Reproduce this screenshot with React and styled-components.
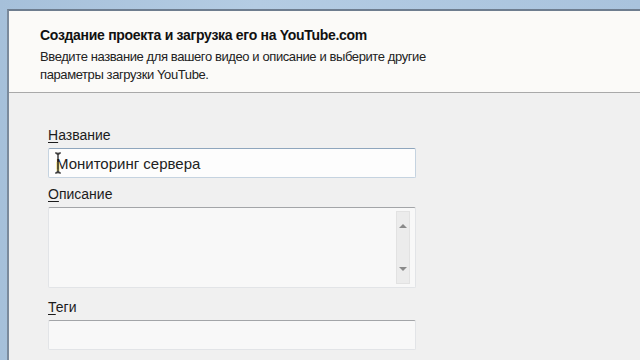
import React from 'react';
import styled, { createGlobalStyle } from 'styled-components';

const Global = createGlobalStyle`
  html, body { margin: 0; padding: 0; }
  body {
    width: 640px;
    height: 360px;
    overflow: hidden;
    font-family: "Liberation Sans", "DejaVu Sans", sans-serif;
  }
`;

const Frame = styled.div`
  width: 640px;
  height: 360px;
  display: grid;
  grid-template-rows: 9px 1fr;
  grid-template-columns: 7px 1fr;
  background: linear-gradient(90deg, #a6c0da 0%, #b4cce3 40%, #a9c3dd 100%);
`;

const Glass = styled.div`
  grid-column: 1 / 3;
`;

const Client = styled.div`
  grid-column: 2;
  display: flex;
  flex-direction: column;
  border-top: 2px solid #6e7d8f;
  border-left: 2px solid #7b8a9c;
  background: #f0f0f0;
  min-height: 0;
`;

const Header = styled.header`
  height: 82px;
  box-sizing: border-box;
  padding: 15px 0 0 31px;
  background: #fbfaf8;
  border-bottom: 1px solid #a9a9a9;
  color: #1e1e1e;
`;

const Title = styled.h1`
  margin: 0;
  font-size: 14px;
  font-weight: bold;
  line-height: 18px;
  letter-spacing: -0.3px;
  color: #111;
`;

const Subtitle = styled.p`
  margin: 4px 0 0;
  font-size: 13px;
  line-height: 18px;
  letter-spacing: -0.4px;
  color: #222;
`;

const Form = styled.section`
  display: flex;
  flex-direction: column;
  padding: 34px 0 0 39px;
  width: 368px;
`;

const Label = styled.label`
  font-size: 14px;
  line-height: 16px;
  color: #1c1c1c;
  margin-bottom: 5px;
  u { text-decoration-thickness: 1px; text-underline-offset: 2px; }
`;

const Field = styled.div`
  position: relative;
  box-sizing: border-box;
  height: ${p => p.h}px;
  margin-bottom: ${p => p.gap}px;
  background: ${p => (p.focused ? '#fdfdfd' : '#f8f8f8')};
  border: 1px solid ${p => (p.focused ? '#c5d3e0' : '#e2e4e7')};
  border-top-color: ${p => (p.focused ? '#8fa6bd' : '#a3a5a8')};
  border-radius: 2px;
  display: flex;
  align-items: center;
  padding-left: 7px;
  font-size: 15px;
  color: #222;
`;

const Scroll = styled.div`
  position: absolute;
  top: 3px;
  right: 5px;
  bottom: 3px;
  width: 14px;
  background: #ececec;
  border: 1px solid #e2e2e2;
  display: flex;
  flex-direction: column;
  justify-content: space-between;
  align-items: center;
  padding: 12px 0 12px;
  box-sizing: border-box;
`;

const Arrow = styled.span`
  width: 0;
  height: 0;
  border-left: 4px solid transparent;
  border-right: 4px solid transparent;
  ${p => (p.up ? 'border-bottom: 4px solid #8a8a8a;' : 'border-top: 4px solid #8a8a8a;')}
`;

const Cursor = styled.svg`
  position: absolute;
  left: 5px;
  top: 3px;
`;

const IBeam = () => (
  <Cursor width="8" height="22" viewBox="0 0 8 22">
    <rect x="2.5" y="10" width="3" height="9" fill="#e4cf5c" opacity="0.75" />
    <path d="M1 1 H3 V2 H5 V1 H7 M4 2 V20 M1 21 H3 V20 H5 V21 H7" stroke="#111" strokeWidth="1.2" fill="none" />
  </Cursor>
);

export default function App() {
  return (
    <>
      <Global />
      <Frame>
        <Glass />
        <div />
        <Client>
          <Header>
            <Title>Создание проекта и загрузка его на YouTube.com</Title>
            <Subtitle>
              Введите название для вашего видео и описание и выберите другие
              <br />
              параметры загрузки YouTube.
            </Subtitle>
          </Header>
          <Form>
            <Label><u>Н</u>азвание</Label>
            <Field h={30} gap={8} focused>
              <IBeam />
              Мониторинг сервера
            </Field>
            <Label><u>О</u>писание</Label>
            <Field h={81} gap={11}>
              <Scroll>
                <Arrow up />
                <Arrow />
              </Scroll>
            </Field>
            <Label><u>Т</u>еги</Label>
            <Field h={30} gap={0} />
          </Form>
        </Client>
      </Frame>
    </>
  );
}
